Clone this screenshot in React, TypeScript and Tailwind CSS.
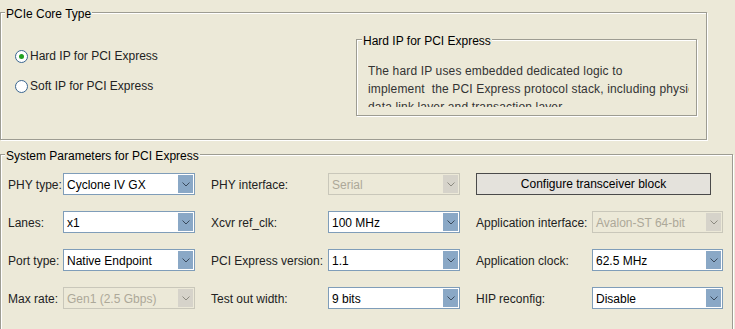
import React from 'react';

const FONT = "font-['Liberation_Sans',Arial,sans-serif]";

interface ComboProps {
  value: string;
  disabled?: boolean;
  width: string;
}

function Chevron({ disabled }: { disabled?: boolean }) {
  return (
    <svg width="8" height="5" viewBox="0 0 8 5" className="block">
      <polyline
        points="0.5,0.5 4,4 7.5,0.5"
        fill="none"
        stroke={disabled ? '#8c8a80' : '#3a4a5c'}
        strokeWidth="1"
      />
    </svg>
  );
}

function Combo({ value, disabled, width }: ComboProps) {
  return (
    <div
      className={`flex h-[22px] ${width} shrink-0 border p-px ${
        disabled ? 'border-[#c9c7ba] bg-[#ece9d8]' : 'border-[#7f9db9] bg-white'
      }`}
    >
      <div
        className={`flex-1 overflow-hidden whitespace-nowrap pl-[2px] pt-px leading-[18px] ${
          disabled ? 'text-[#aca899]' : 'text-black'
        }`}
      >
        {value}
      </div>
      <div
        className={`flex w-[15px] items-center justify-center ${
          disabled ? 'bg-[#d6d3ca]' : 'bg-[#8aa8c6]'
        }`}
      >
        <Chevron disabled={disabled} />
      </div>
    </div>
  );
}

function Field({
  label,
  labelWidth,
  value,
  comboWidth,
  disabled,
}: {
  label: string;
  labelWidth: string;
  value: string;
  comboWidth: string;
  disabled?: boolean;
}) {
  return (
    <div className="flex h-[22px] items-center">
      <div className={`${labelWidth} shrink-0 whitespace-nowrap pt-px text-[#222]`}>{label}</div>
      <Combo value={value} disabled={disabled} width={comboWidth} />
    </div>
  );
}

function Radio({ checked, label }: { checked?: boolean; label: string }) {
  return (
    <div className="flex items-center gap-[2px]">
      <div className="flex h-[13px] w-[13px] items-center justify-center rounded-full border border-[#3a6690] bg-white">
        {checked && <div className="h-[5px] w-[5px] rounded-full bg-[#21a121]" />}
      </div>
      <span className="leading-[14px] text-[#222]">{label}</span>
    </div>
  );
}

const ETCHED =
  'border border-[#9d9c92] shadow-[inset_1px_1px_0_#ffffff,1px_1px_0_#ffffff]';

export default function App() {
  return (
    <div className={`h-[329px] w-[735px] overflow-hidden bg-[#ece9d8] text-[12px] ${FONT}`}>
      {/* PCIe Core Type */}
      <div className={`relative mt-[12px] h-[128px] w-[707px] ${ETCHED}`}>
        <span className="absolute left-[4px] top-[-6px] bg-[#ece9d8] px-px leading-[14px] text-black">
          PCIe Core Type
        </span>
        <div className="flex items-start pl-[14px] pt-[26px]">
          <div className="mt-[10px] flex w-[341px] flex-col gap-[16px]">
            <Radio checked label="Hard IP for PCI Express" />
            <Radio label="Soft IP for PCI Express" />
          </div>
          <div className={`relative h-[77px] w-[341px] ${ETCHED}`}>
            <span className="absolute left-[5px] top-[-6px] bg-[#ece9d8] px-px leading-[14px] text-black">
              Hard IP for PCI Express
            </span>
            <div className="ml-[11px] mt-[22px] h-[45px] w-[321px] overflow-hidden whitespace-pre leading-[18px] tracking-[0.15px] text-[#333]">
              {'The hard IP uses embedded dedicated logic to\nimplement  the PCI Express protocol stack, including physical\ndata link layer and transaction layer.'}
            </div>
          </div>
        </div>
      </div>

      {/* System Parameters */}
      <div className={`relative mt-[14px] h-[200px] w-[733px] ${ETCHED}`}>
        <span className="absolute left-[4px] top-[-6px] bg-[#ece9d8] px-px leading-[14px] text-black">
          System Parameters for PCI Express
        </span>
        <div className="flex gap-[16px] pl-[7px] pt-[18px]">
          <div className="flex flex-col gap-[16px]">
            <Field label="PHY type:" labelWidth="w-[55px]" value="Cyclone IV GX" comboWidth="w-[132px]" />
            <Field label="Lanes:" labelWidth="w-[55px]" value="x1" comboWidth="w-[132px]" />
            <Field label="Port type:" labelWidth="w-[55px]" value="Native Endpoint" comboWidth="w-[132px]" />
            <Field label="Max rate:" labelWidth="w-[55px]" value="Gen1 (2.5 Gbps)" comboWidth="w-[132px]" disabled />
          </div>
          <div className="flex flex-col gap-[16px]">
            <Field label="PHY interface:" labelWidth="w-[117px]" value="Serial" comboWidth="w-[132px]" disabled />
            <Field label="Xcvr ref_clk:" labelWidth="w-[117px]" value="100 MHz" comboWidth="w-[132px]" />
            <Field label="PCI Express version:" labelWidth="w-[117px]" value="1.1" comboWidth="w-[132px]" />
            <Field label="Test out width:" labelWidth="w-[117px]" value="9 bits" comboWidth="w-[132px]" />
          </div>
          <div className="flex flex-col gap-[16px]">
            <button className="h-[22px] w-[235px] border border-[#4a4a4a] bg-[#e4e2dc] leading-[20px] text-black">
              Configure transceiver block
            </button>
            <Field label="Application interface:" labelWidth="w-[116px]" value="Avalon-ST 64-bit" comboWidth="w-[131px]" disabled />
            <Field label="Application clock:" labelWidth="w-[116px]" value="62.5 MHz" comboWidth="w-[131px]" />
            <Field label="HIP reconfig:" labelWidth="w-[116px]" value="Disable" comboWidth="w-[131px]" />
          </div>
        </div>
      </div>
    </div>
  );
}
